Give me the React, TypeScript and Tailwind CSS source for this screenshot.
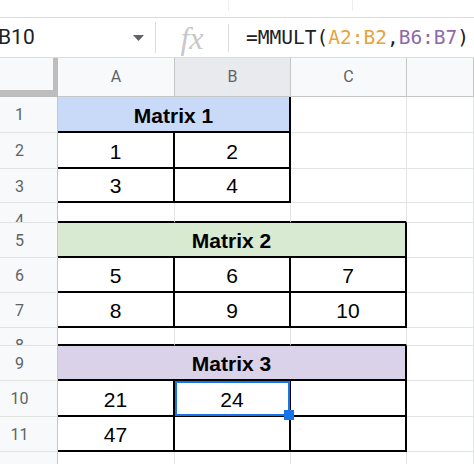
import type { ReactNode } from 'react';

const rowHead = 'overflow-hidden bg-[#f8f9fa] border-r border-b border-r-[#c4c7c5] border-b-[#e1e3e1] pr-[18px]';
const gray = 'border-r border-b border-[#e2e3e3]';
const black = 'border-r-2 border-b-2 border-black';
const grayBlackBottom = 'border-r border-b-2 border-r-[#e2e3e3] border-b-black';

function RowNum({ n, selected }: { n?: number; selected?: boolean }) {
    return (
        <div className={selected ? rowHead + ' bg-[#e8eaed]' : rowHead}>
            <div className="h-[35px] flex items-center justify-center text-[16px] text-[#5f6368] font-['Roboto',sans-serif]">
                {n}
            </div>
        </div>
    );
}

function Cell({ children, className }: { children?: ReactNode; className: string }) {
    return (
        <div className={'flex items-end justify-center pb-[3px] text-[21px] leading-[24px] text-black ' + className}>
            {children}
        </div>
    );
}

function ColHead({ label, selected }: { label: string; selected?: boolean }) {
    return (
        <div
            className={
                'flex items-center justify-center border-r border-b border-[#c4c7c5] text-[16px] text-[#5f6368] font-[\'Roboto\',sans-serif] ' +
                (selected ? 'bg-[#e8eaed]' : 'bg-[#f8f9fa]')
            }
        >
            {label}
        </div>
    );
}

export default function App() {
    return (
        <div className="w-[474px] h-[464px] overflow-hidden bg-white font-['Liberation_Sans',Arial,sans-serif]">
            {/* toolbar remnant */}
            <div className="h-[18px] flex border-b border-[#dadce0]">
                <div className="w-[228px]" />
                <div className="w-px h-[11px] bg-[#eeeeee]" />
                <div className="w-[123px]" />
                <div className="w-px h-[11px] bg-[#eeeeee]" />
            </div>

            {/* formula bar */}
            <div className="h-[40px] flex items-center border-b border-[#dadce0]">
                <div className="w-[155px] flex items-center justify-between pr-[11px]">
                    <span className="-ml-[2px] text-[21px] text-[#202124] font-['Roboto',sans-serif]">B10</span>
                    <svg width="11" height="6" viewBox="0 0 11 6">
                        <polygon points="0,0 11,0 5.5,6" fill="#5f6368" />
                    </svg>
                </div>
                <div className="w-px h-[31px] bg-[#dadce0]" />
                <div className="w-[72px] flex justify-center">
                    <span className="text-[32px] leading-none italic text-[#c8c8c8] font-['Liberation_Serif',serif]">fx</span>
                </div>
                <div className="w-px h-[28px] bg-[#dadce0]" />
                <div className="pl-[17px] text-[19.5px] text-[#202124] font-['DejaVu_Sans_Mono',monospace] whitespace-nowrap">
                    =MMULT(<span className="text-[#e8a33a]">A2:B2</span>,<span className="text-[#8c6aa8]">B6:B7</span>)
                </div>
            </div>

            {/* sheet grid */}
            <div className="grid grid-cols-[58px_117px_116px_116px_1fr] grid-rows-[39px_36px_36px_34px_20px_35px_35px_35px_18px_35px_36px_35px_40px]">
                <div className="bg-[#f8f9fa] border-r-[5px] border-b-[7px] border-[#bdbdbd]" />
                <ColHead label="A" />
                <ColHead label="B" selected />
                <ColHead label="C" />
                <ColHead label="" />

                <RowNum n={1} />
                <Cell className={'col-span-2 bg-[#c9daf8] font-bold ' + black}>Matrix 1</Cell>
                <Cell className={gray} />
                <Cell className={gray} />

                <RowNum n={2} />
                <Cell className={black}>1</Cell>
                <Cell className={black}>2</Cell>
                <Cell className={gray} />
                <Cell className={gray} />

                <RowNum n={3} />
                <Cell className={black}>3</Cell>
                <Cell className={black}>4</Cell>
                <Cell className={gray} />
                <Cell className={gray} />

                <RowNum n={4} />
                <Cell className={grayBlackBottom} />
                <Cell className={grayBlackBottom} />
                <Cell className={grayBlackBottom} />
                <Cell className={gray} />

                <RowNum n={5} />
                <Cell className={'col-span-3 bg-[#d9ead3] font-bold ' + black}>Matrix 2</Cell>
                <Cell className={gray} />

                <RowNum n={6} />
                <Cell className={black}>5</Cell>
                <Cell className={black}>6</Cell>
                <Cell className={black}>7</Cell>
                <Cell className={gray} />

                <RowNum n={7} />
                <Cell className={black}>8</Cell>
                <Cell className={black}>9</Cell>
                <Cell className={black}>10</Cell>
                <Cell className={gray} />

                <RowNum n={8} />
                <Cell className={grayBlackBottom} />
                <Cell className={grayBlackBottom} />
                <Cell className={grayBlackBottom} />
                <Cell className={gray} />

                <RowNum n={9} />
                <Cell className={'col-span-3 bg-[#d9d2e9] font-bold ' + black}>Matrix 3</Cell>
                <Cell className={gray} />

                <RowNum n={10} selected />
                <Cell className={black}>21</Cell>
                <Cell className={'relative ' + black}>
                    24
                    <div className="absolute top-0 left-0 -right-px -bottom-px z-10 border-2 border-[#1a73e8]" />
                    <div className="absolute -right-[5px] -bottom-[5px] z-20 w-[10px] h-[10px] bg-[#1a73e8]" />
                </Cell>
                <Cell className={black} />
                <Cell className={gray} />

                <RowNum n={11} />
                <Cell className={black}>47</Cell>
                <Cell className={black} />
                <Cell className={black} />
                <Cell className={gray} />

                <RowNum />
                <Cell className={gray} />
                <Cell className={gray} />
                <Cell className={gray} />
                <Cell className={gray} />
            </div>
        </div>
    );
}
